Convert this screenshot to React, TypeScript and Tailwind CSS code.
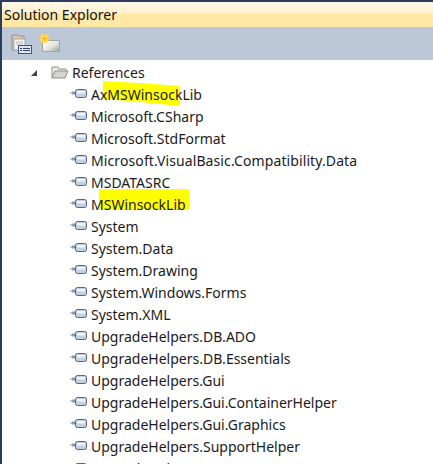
const RefIcon = () => (
  <svg width="18" height="12" viewBox="0 0 18 12" className="shrink-0 mb-[2px]">
    <rect x="0" y="5" width="2" height="2" fill="#c3c9d2" />
    <rect x="2" y="4.5" width="3" height="3" fill="#8b98a8" />
    <rect x="5.5" y="2.5" width="11" height="8" rx="2" fill="#c4d1e2" stroke="#55647a" strokeWidth="1" />
    <rect x="7" y="4" width="8" height="2.5" rx="1" fill="#f0f4f9" />
  </svg>
);

const rows: string[] = [
  "AxMSWinsockLib",
  "Microsoft.CSharp",
  "Microsoft.StdFormat",
  "Microsoft.VisualBasic.Compatibility.Data",
  "MSDATASRC",
  "MSWinsockLib",
  "System",
  "System.Data",
  "System.Drawing",
  "System.Windows.Forms",
  "System.XML",
  "UpgradeHelpers.DB.ADO",
  "UpgradeHelpers.DB.Essentials",
  "UpgradeHelpers.Gui",
  "UpgradeHelpers.Gui.ContainerHelper",
  "UpgradeHelpers.Gui.Graphics",
  "UpgradeHelpers.SupportHelper",
  "UpgradeHelpers.VB",
];

export default function App() {
  return (
    <div className="w-[433px] h-[464px] overflow-hidden bg-white flex flex-col font-['Noto_Sans',sans-serif] text-[#1a1a1a]">
      <div className="h-[2px] shrink-0 bg-[#2b3d5c]" />
      <div className="flex-1 min-h-0 flex">
        <div className="w-[2px] shrink-0 bg-[#2b3d5c]" />
        <div className="flex-1 min-w-0 flex flex-col">
          <div className="h-[25px] shrink-0 bg-[linear-gradient(#fff8e8_0%,#fff0cf_45%,#ffe8a6_50%,#ffe8a6_100%)] flex items-center pl-[2px] text-[14px] text-[#111]">
            Solution Explorer
          </div>
          <div className="h-[33px] shrink-0 bg-[#bcc7d8] flex items-center pl-[9px] gap-[8px]">
            <svg width="21" height="20" viewBox="0 0 21 20">
              <path d="M1 1h6l1 1h5v14H1z" fill="#dcc9a0" stroke="#8a8f98" />
              <rect x="3" y="5" width="11" height="11" fill="#f3f3f0" stroke="#a6abb2" />
              <path d="M5 8h7M5 10h7" stroke="#b8bcc2" />
              <rect x="7.5" y="11.5" width="13" height="8" fill="#dfe6f2" stroke="#3f5480" />
              <path d="M9 14h2v1H9zM12 14h7v1h-7zM9 16h2v1H9zM12 16h7v1h-7z" fill="#33466e" />
            </svg>
            <svg width="21" height="20" viewBox="0 0 21 20">
              <defs>
                <linearGradient id="f" x1="0" y1="0" x2="1" y2="1">
                  <stop offset="0" stopColor="#ffffff" />
                  <stop offset="0.55" stopColor="#e4e4e2" />
                  <stop offset="1" stopColor="#9c9c98" />
                </linearGradient>
              </defs>
              <path d="M2.5 6.5h17v11h-17z" fill="url(#f)" stroke="#a4a4a0" />
              <circle cx="4.5" cy="4.5" r="4.5" fill="#fbe27a" />
              <path d="M4.5 0v9M0 4.5h9M1.5 1.5l6 6M7.5 1.5l-6 6" stroke="#f4c430" strokeWidth="1" />
            </svg>
          </div>
          <div className="flex-1 min-h-0 pl-[28px] pt-[1px]">
            <div className="h-[22px] flex items-center">
              <svg width="8" height="8" viewBox="0 0 8 8" className="mt-[1px]">
                <path d="M7 1v6H1z" fill="#444" />
              </svg>
              <svg width="20" height="15" viewBox="0 0 20 15" className="ml-[12px]">
                <path d="M2 13V2h6l1 2h7v2" fill="#ecebe8" stroke="#8f8f8f" />
                <path d="M2 13l3-7h13l-3 7z" fill="#d4d4d2" stroke="#8f8f8f" />
              </svg>
              <span className="ml-[2px] text-[14px]">References</span>
            </div>
            {rows.map((name) => (
              <div key={name} className="relative h-[22px] flex items-center pl-[40px] gap-[3px] text-[14px] whitespace-nowrap">
                {name === "AxMSWinsockLib" && (
                  <svg width="77" height="25" viewBox="0 0 77 25" className="absolute left-[73px] top-[-2px]">
                    <path d="M0 0L37 2L77 5V25L37 21L0 18z" fill="#ffff00" />
                  </svg>
                )}
                {name === "MSWinsockLib" && (
                  <div className="absolute left-[69px] top-[-4px] w-[90px] h-[21px] bg-[#ffff00]" />
                )}
                <RefIcon />
                <span className={name.includes("VisualBasic") ? "relative z-10 tracking-[0.1px]" : "relative z-10"}>{name}</span>
              </div>
            ))}
          </div>
        </div>
      </div>
    </div>
  );
}
